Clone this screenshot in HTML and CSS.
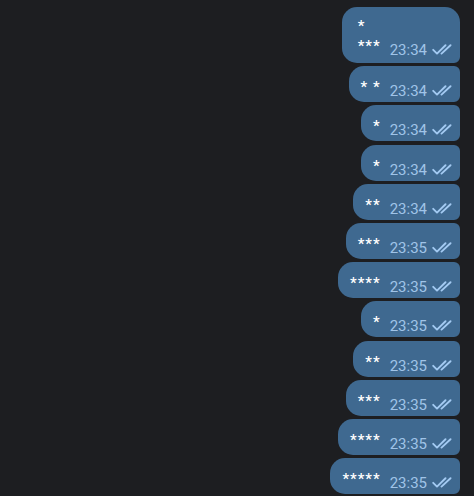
FILE: index.html
```html
<!DOCTYPE html>
<html lang="en">
<head>
    <meta charset="UTF-8">
    <title>Chat</title>
    <link rel="stylesheet" href="styles.css">
</head>
<body>
    <svg width="0" height="0" class="defs">
        <symbol id="ticks" viewBox="0 0 20 11">
            <polyline points="1.2,5.8 5,9.6 13.5,1.2" fill="none" stroke="currentColor" stroke-width="1.9" stroke-linecap="round" stroke-linejoin="round"/>
            <polyline points="9.5,9.6 18.5,1.2" fill="none" stroke="currentColor" stroke-width="1.9" stroke-linecap="round"/>
        </symbol>
    </svg>
    <div class="chat">
        <div class="msg multi">
            <div class="text">*<br>***</div>
            <div class="meta">23:34 <svg class="ticks"><use href="#ticks"/></svg></div>
        </div>
        <div class="msg">
            <div class="text">* *</div>
            <div class="meta">23:34 <svg class="ticks"><use href="#ticks"/></svg></div>
        </div>
        <div class="msg">
            <div class="text">*</div>
            <div class="meta">23:34 <svg class="ticks"><use href="#ticks"/></svg></div>
        </div>
        <div class="msg">
            <div class="text">*</div>
            <div class="meta">23:34 <svg class="ticks"><use href="#ticks"/></svg></div>
        </div>
        <div class="msg">
            <div class="text">**</div>
            <div class="meta">23:34 <svg class="ticks"><use href="#ticks"/></svg></div>
        </div>
        <div class="msg">
            <div class="text">***</div>
            <div class="meta">23:35 <svg class="ticks"><use href="#ticks"/></svg></div>
        </div>
        <div class="msg">
            <div class="text">****</div>
            <div class="meta">23:35 <svg class="ticks"><use href="#ticks"/></svg></div>
        </div>
        <div class="msg">
            <div class="text">*</div>
            <div class="meta">23:35 <svg class="ticks"><use href="#ticks"/></svg></div>
        </div>
        <div class="msg">
            <div class="text">**</div>
            <div class="meta">23:35 <svg class="ticks"><use href="#ticks"/></svg></div>
        </div>
        <div class="msg">
            <div class="text">***</div>
            <div class="meta">23:35 <svg class="ticks"><use href="#ticks"/></svg></div>
        </div>
        <div class="msg">
            <div class="text">****</div>
            <div class="meta">23:35 <svg class="ticks"><use href="#ticks"/></svg></div>
        </div>
        <div class="msg">
            <div class="text">*****</div>
            <div class="meta">23:35 <svg class="ticks"><use href="#ticks"/></svg></div>
        </div>
    </div>
</body>
</html>
```

FILE: styles.css
```css
body {
    margin: 0;
    height: 100vh;
    overflow: hidden;
    background-color: #1d1e21;
    font-family: 'Roboto', 'Noto Sans', sans-serif;
}

.defs {
    position: absolute;
}

.chat {
    display: flex;
    flex-direction: column;
    align-items: flex-end;
    gap: 3.2px;
    padding: 7px 14px 0 0;
}

.msg {
    display: flex;
    align-items: flex-end;
    gap: 9px;
    height: 36px;
    box-sizing: border-box;
    padding: 0 8px 1px 12px;
    background-color: #3f6990;
    border-radius: 15px 6px 6px 15px;
}

.msg.multi {
    height: 56px;
    padding: 0 8px 3px 16px;
    border-radius: 15px 15px 6px 15px;
}

.text {
    color: #ffffff;
    font-size: 15px;
    font-weight: 500;
    line-height: 20px;
    letter-spacing: 1px;
    padding-bottom: 4px;
}

.meta {
    display: flex;
    align-items: baseline;
    gap: 5px;
    color: #a0c4e8;
    font-size: 15px;
    line-height: 20px;
}

.ticks {
    width: 20px;
    height: 11px;
    color: #a3caf2;
}
```
